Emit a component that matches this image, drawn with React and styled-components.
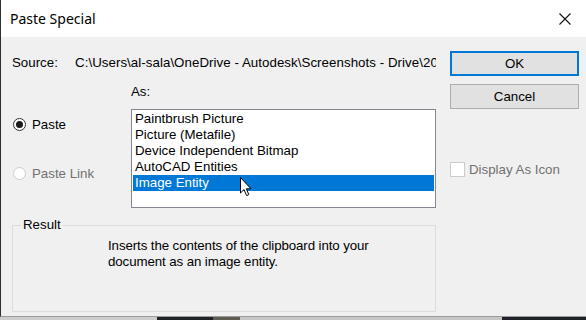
import React from 'react';
import styled, { createGlobalStyle } from 'styled-components';

const Global = createGlobalStyle`
  html, body {
    margin: 0;
    padding: 0;
    background: #cfcfcf;
  }
  body {
    font-family: "Liberation Sans", Arial, sans-serif;
    font-size: 13.3px;
    color: #000;
  }
`;

const Page = styled.div`
  width: 586px;
  height: 320px;
  display: flex;
  flex-direction: column;
  overflow: hidden;
  position: relative;
`;

const Window = styled.div`
  width: 585px;
  border-left: 1px solid #2f2f2f;
  border-bottom: 1px solid #9b9b9b;
  display: flex;
  flex-direction: column;
`;

const TitleBar = styled.div`
  height: 37px;
  background: #fff;
  display: flex;
  align-items: center;
  justify-content: space-between;
  padding: 0 15px 0 9px;
`;

const Title = styled.div`
  font-family: "Noto Sans", "Open Sans", sans-serif;
  font-size: 14px;
  color: #000;
  margin-top: -1px;
`;

const Body = styled.div`
  height: 279px;
  box-sizing: border-box;
  background: #f0f0f0;
  padding: 14px 0 4px 11px;
  display: grid;
  grid-template-columns: 424px 129px;
  column-gap: 14px;
`;

const Main = styled.div`
  display: flex;
  flex-direction: column;
`;

const SourceRow = styled.div`
  margin-top: 4px;
  height: 16px;
  line-height: 16px;
  display: flex;
`;

const SourceLabel = styled.div`
  width: 63px;
  flex: none;
`;

const SourcePath = styled.div`
  flex: 1;
  min-width: 0;
  white-space: nowrap;
  overflow: hidden;
  letter-spacing: 0.05px;
`;

const AsLabel = styled.div`
  margin-top: 13px;
  height: 16px;
  line-height: 16px;
  padding-left: 119px;
`;

const Middle = styled.div`
  margin-top: 9px;
  display: flex;
`;

const Radios = styled.div`
  width: 119px;
  display: flex;
  flex-direction: column;
  gap: 33px;
  padding-top: 7px;
`;

const RadioRow = styled.div`
  display: flex;
  align-items: center;
  height: 16px;
  color: ${p => (p.disabled ? '#717171' : '#000')};
`;

const RadioCircle = styled.span`
  width: 13px;
  height: 13px;
  box-sizing: border-box;
  border-radius: 50%;
  border: 1px solid ${p => (p.disabled ? '#cccccc' : '#333')};
  background: #fff;
  margin: 0 6px 0 1px;
  display: flex;
  align-items: center;
  justify-content: center;
  &::after {
    content: '';
    width: 7px;
    height: 7px;
    border-radius: 50%;
    background: ${p => (p.checked ? '#1a1a1a' : 'transparent')};
  }
`;

const ListBox = styled.div`
  width: 305px;
  height: 99px;
  box-sizing: border-box;
  border: 1px solid #828790;
  background: #fff;
  padding: 1px 1px 0 1px;
`;

const ListItem = styled.div`
  height: 16px;
  line-height: 16px;
  padding-left: 2px;
  background: ${p => (p.selected ? '#0078d7' : 'transparent')};
  color: ${p => (p.selected ? '#fff' : '#000')};
  white-space: nowrap;
`;

const Group = styled.fieldset`
  margin: 9px 0 0 0;
  padding: 0;
  height: 95px;
  box-sizing: border-box;
  border: 1px solid #dcdcdc;
  min-width: 0;
`;

const Legend = styled.legend`
  margin-left: 8px;
  padding: 0 2px;
  line-height: 16px;
  height: 16px;
`;

const Description = styled.div`
  margin-top: 5px;
  padding-left: 95px;
  line-height: 16px;
  width: 270px;
  letter-spacing: -0.1px;
`;

const Side = styled.div`
  display: flex;
  flex-direction: column;
`;

const Button = styled.div`
  height: 25px;
  box-sizing: border-box;
  background: #e1e1e1;
  border: ${p => (p.primary ? '2px solid #0078d7' : '1px solid #adadad')};
  display: flex;
  align-items: center;
  justify-content: center;
  margin-bottom: 8px;
`;

const CheckRow = styled.div`
  margin-top: 45px;
  display: flex;
  align-items: center;
  gap: 4px;
  color: #717171;
`;

const CheckBox = styled.span`
  width: 15px;
  height: 15px;
  box-sizing: border-box;
  border: 1px solid #cccccc;
  background: #fff;
`;

const Desktop = styled.div`
  flex: 1;
  display: flex;
`;

const Strip = styled.div`
  width: ${p => p.w}px;
  background: ${p => p.c};
`;

const Cursor = styled.svg`
  position: absolute;
  left: 240px;
  top: 177px;
`;

export default function App() {
  return (
    <Page>
      <Global />
      <Window>
        <TitleBar>
          <Title>Paste Special</Title>
          <svg width="12" height="12" viewBox="0 0 12 12">
            <path d="M0.5 0.5 L11.5 11.5 M11.5 0.5 L0.5 11.5" stroke="#111" strokeWidth="1.1" fill="none" />
          </svg>
        </TitleBar>
        <Body>
          <Main>
            <SourceRow>
              <SourceLabel>Source:</SourceLabel>
              <SourcePath>C:\Users\al-sala\OneDrive - Autodesk\Screenshots - Drive\20</SourcePath>
            </SourceRow>
            <AsLabel>As:</AsLabel>
            <Middle>
              <Radios>
                <RadioRow>
                  <RadioCircle checked />
                  Paste
                </RadioRow>
                <RadioRow disabled>
                  <RadioCircle disabled />
                  Paste Link
                </RadioRow>
              </Radios>
              <ListBox>
                <ListItem>Paintbrush Picture</ListItem>
                <ListItem>Picture (Metafile)</ListItem>
                <ListItem>Device Independent Bitmap</ListItem>
                <ListItem>AutoCAD Entities</ListItem>
                <ListItem selected>Image Entity</ListItem>
              </ListBox>
            </Middle>
            <Group>
              <Legend>Result</Legend>
              <Description>
                Inserts the contents of the clipboard into your document as an image entity.
              </Description>
            </Group>
          </Main>
          <Side>
            <Button primary>OK</Button>
            <Button>Cancel</Button>
            <CheckRow>
              <CheckBox />
              Display As Icon
            </CheckRow>
          </Side>
        </Body>
      </Window>
      <Desktop>
        <Strip w={157} c="#cdcdcd" />
        <Strip w={56} c="#1e2228" />
        <Strip w={27} c="#5e5c50" />
        <Strip w={262} c="#c6c6c6" />
        <Strip w={84} c="#1e2228" />
      </Desktop>
      <Cursor width="13" height="20" viewBox="0 0 13 20">
        <path d="M0.5 0.5 L0.5 16 L4 12.6 L6.6 18.6 L8.8 17.6 L6.3 11.8 L11 11.8 Z" fill="#fff" stroke="#000" strokeWidth="1" strokeLinejoin="miter" />
      </Cursor>
    </Page>
  );
}
